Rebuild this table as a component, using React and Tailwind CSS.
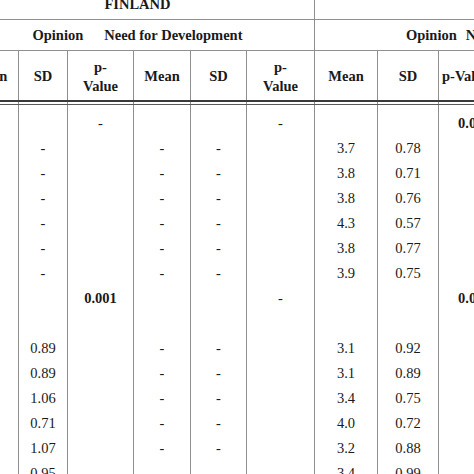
const cols = [
  "w-[57px]",
  "w-[49px] border-l border-[#8f8f8f]",
  "w-[66px] border-l border-[#8f8f8f]",
  "w-[57px] border-l border-[#8f8f8f]",
  "w-[56px] border-l border-[#8f8f8f]",
  "w-[68px] border-l border-[#8f8f8f]",
  "w-[63px] border-l border-[#8f8f8f]",
  "w-[61px] border-l border-[#8f8f8f]",
  "w-[56px] border-l border-[#8f8f8f]",
];

const headers = ["Mean", "SD", "p-\nValue", "Mean", "SD", "p-\nValue", "Mean", "SD", "p-Value"];

const rows = [
  ["", "", "-", "", "", "-", "", "", "0.001"],
  ["", "-", "", "-", "-", "", "3.7", "0.78", ""],
  ["", "-", "", "-", "-", "", "3.8", "0.71", ""],
  ["", "-", "", "-", "-", "", "3.8", "0.76", ""],
  ["", "-", "", "-", "-", "", "4.3", "0.57", ""],
  ["", "-", "", "-", "-", "", "3.8", "0.77", ""],
  ["", "-", "", "-", "-", "", "3.9", "0.75", ""],
  ["", "", "0.001", "", "", "-", "", "", "0.001"],
  ["", "", "", "", "", "", "", "", ""],
  ["", "0.89", "", "-", "-", "", "3.1", "0.92", ""],
  ["", "0.89", "", "-", "-", "", "3.1", "0.89", ""],
  ["", "1.06", "", "-", "-", "", "3.4", "0.75", ""],
  ["", "0.71", "", "-", "-", "", "4.0", "0.72", ""],
  ["", "1.07", "", "-", "-", "", "3.2", "0.88", ""],
  ["", "0.95", "", "-", "-", "", "3.4", "0.99", ""],
];

export default function App() {
  return (
    <div className="w-[474px] h-[474px] overflow-hidden bg-white text-[#1a1a1a] text-[14.5px] font-['Liberation_Serif','Times_New_Roman',serif]">
      <div className="ml-[-39px] w-[533px]">
        {/* country row */}
        <div className="flex h-[20px] border-b border-[#8f8f8f]">
          <div className="w-[353px] flex justify-center font-bold leading-none -mt-[3px]">FINLAND</div>
          <div className="w-[180px] border-l border-[#8f8f8f]"></div>
        </div>

        {/* opinion row */}
        <div className="flex h-[31px] border-b border-[#8f8f8f] font-bold">
          <div className="w-[353px] flex justify-center items-center gap-[21px] pt-[2px]">
            <span>Opinion</span>
            <span>Need for Development</span>
          </div>
          <div className="w-[180px] border-l border-[#8f8f8f] flex items-center pl-[91px] pt-[2px] whitespace-nowrap">
            <span>Opinion</span>
            <span className="ml-[9px]">Need</span>
          </div>
        </div>

        {/* column labels */}
        <div className="flex h-[49px] font-bold">
          {headers.map((h, i) => (
            <div
              key={i}
              className={`${cols[i]} flex items-center ${i === 8 ? "justify-start pl-[3px]" : "justify-center"} text-center whitespace-pre leading-[19px] pt-[2px]`}
            >
              {h}
            </div>
          ))}
        </div>

        {/* double rule */}
        <div className="h-[2px] bg-[#3a3a3a]"></div>
        <div className="flex h-[2px]">
          {cols.map((c, i) => (
            <div key={i} className={c}></div>
          ))}
        </div>
        <div className="h-px bg-[#5a5a5a]"></div>

        {/* body */}
        <div className="flex h-[6px]">
          {cols.map((c, i) => (
            <div key={i} className={c}></div>
          ))}
        </div>
        {rows.map((r, ri) => (
          <div key={ri} className="flex h-[25px] leading-[25px]">
            {r.map((v, i) => (
              <div
                key={i}
                className={`${cols[i]} ${i === 8 ? "text-left pl-[19px]" : "text-center"} ${v === "0.001" ? "font-bold" : ""} whitespace-nowrap`}
              >
                {v}
              </div>
            ))}
          </div>
        ))}
      </div>
    </div>
  );
}
